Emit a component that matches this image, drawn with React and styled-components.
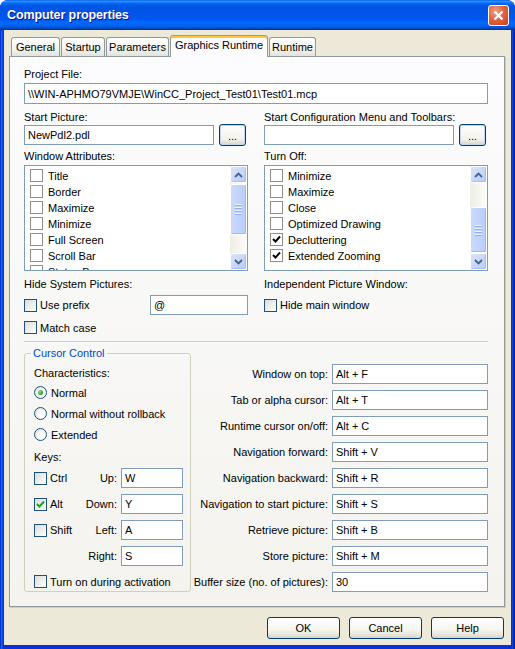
import React from "react"
import styled, { createGlobalStyle } from "styled-components"

const GlobalStyle = createGlobalStyle`
  html, body {
    margin: 0;
    padding: 0;
    background: #ffffff;
  }
  body {
    font-family: "Liberation Sans", Arial, sans-serif;
    font-size: 11px;
    color: #000;
  }
  * {
    box-sizing: border-box;
  }
`

const Window = styled.div`
  width: 515px;
  height: 649px;
  display: flex;
  flex-direction: column;
  background: linear-gradient(90deg, #0019cf 0px, #0855dd 1px, #166aee 2px, #0831d9 3px, #0831d9 512px, #0855dd 513px, #001ea0 514px);
  border-radius: 8px 8px 0 0;
  overflow: hidden;
`

const TitleBar = styled.div`
  height: 30px;
  flex: none;
  display: flex;
  align-items: center;
  justify-content: space-between;
  padding: 0 6px 0 7px;
  background: linear-gradient(
    #0058ee 0%, #3593ff 4%, #288eff 6%, #127dff 8%, #036ffc 10%,
    #0262ee 14%, #0057e5 20%, #0054e3 24%, #0055eb 56%, #005bf5 66%,
    #026afe 76%, #0062ef 86%, #0052d6 92%, #0040ab 96%, #003092 100%
  );
`

const Title = styled.span`
  color: #ffffff;
  font-weight: bold;
  font-size: 12.5px;
  letter-spacing: -0.1px;
  text-shadow: 1px 1px 0 #0f1089;
`

const CloseButton = styled.div`
  width: 21px;
  height: 21px;
  border: 1px solid #ffffff;
  border-radius: 3px;
  background: radial-gradient(circle at 35% 30%, #f0a48a 0%, #e2633f 45%, #c8401c 100%);
  display: flex;
  align-items: center;
  justify-content: center;
`

const Client = styled.div`
  flex: 1;
  margin: 0 4px 4px 4px;
  background: #ece9d8;
  display: flex;
  flex-direction: column;
  padding: 5px 6px 6px 5px;
`

const TabStrip = styled.div`
  height: 21px;
  display: flex;
  align-items: flex-end;
  gap: 1px;
  padding-left: 2px;
`

const Tab = styled.div`
  width: ${p => p.$w}px;
  height: ${p => (p.$active ? 22 : 19)}px;
  margin-bottom: ${p => (p.$active ? -1 : 0)}px;
  position: relative;
  z-index: ${p => (p.$active ? 1 : 0)};
  border: 1px solid #919b9c;
  border-bottom: none;
  border-top-color: ${p => (p.$active ? "#e68b2c" : "#919b9c")};
  border-radius: 3px 3px 0 0;
  background: ${p => (p.$active ? "#fcfcfe" : "linear-gradient(#ffffff, #f3f3ef 60%, #e3e2dc)")};
  box-shadow: ${p => (p.$active ? "inset 0 2px 0 #ffc73c" : "none")};
  display: flex;
  align-items: center;
  justify-content: center;
  padding-bottom: ${p => (p.$active ? 3 : 0)}px;
  white-space: nowrap;
`

const Panel = styled.div`
  height: 551px;
  border: 1px solid #919b9c;
  box-shadow: 1px 1px 0 #d0cec1;
  background: linear-gradient(#fcfcfe, #f4f3ee);
  padding: 11px 16px 0 14px;
  display: flex;
  flex-direction: column;
`

const Label = styled.div`
  height: 13px;
  line-height: 13px;
  white-space: nowrap;
  margin-top: ${p => p.$top || 0}px;
  margin-bottom: ${p => (p.$gap === undefined ? 2 : p.$gap)}px;
`

const TextBox = styled.input`
  width: ${p => (p.$w ? `${p.$w}px` : "100%")};
  height: ${p => p.$h || 20}px;
  border: 1px solid #7f9db9;
  background: #ffffff;
  padding: 0 3px;
  margin: 0;
  font-family: "Liberation Sans", Arial, sans-serif;
  font-size: 11px;
  color: #000;
  outline: none;
`

const Columns = styled.div`
  display: grid;
  grid-template-columns: 224px 224px;
  column-gap: 16px;
  margin-top: ${p => p.$top || 0}px;
`

const Field = styled.div`
  display: flex;
  flex-direction: column;
`

const PickerRow = styled.div`
  height: 22px;
  display: flex;
  align-items: center;
  gap: 5px;
`

const DotsButton = styled.div`
  width: 27px;
  height: 22px;
  border: 1px solid #003c74;
  border-radius: 3px;
  background: linear-gradient(#ffffff, #f3f2ec 70%, #d8d3c6);
  box-shadow: inset 0 0 0 1px #c4d6f5;
  display: flex;
  align-items: flex-end;
  justify-content: center;
  padding-bottom: 5px;
  line-height: 8px;
  font-size: 11px;
`

const ListBox = styled.div`
  height: 106px;
  border: 1px solid #7f9db9;
  background: #ffffff;
  display: flex;
`

const ListItems = styled.div`
  flex: 1;
  overflow: hidden;
  padding-top: 2px;
`

const ListItem = styled.div`
  height: 16px;
  display: flex;
  align-items: center;
  gap: 5px;
  padding-left: 5px;
  white-space: nowrap;
`

const FlatBox = styled.div`
  width: 13px;
  height: 13px;
  flex: none;
  border: 1px solid #8e8f8f;
  background: #ffffff;
  display: flex;
  align-items: center;
  justify-content: center;
  margin-top: -2px;
`

const ScrollBar = styled.div`
  width: 17px;
  flex: none;
  display: flex;
  flex-direction: column;
  background: linear-gradient(90deg, #eeede5, #fdfdfa);
`

const ScrollArrow = styled.div`
  height: 17px;
  flex: none;
  border: 1px solid #ffffff;
  border-radius: 2px;
  background: linear-gradient(135deg, #d9e5fd, #b8cbf8);
  box-shadow: inset -1px -1px 0 #a7bef4;
  display: flex;
  align-items: center;
  justify-content: center;
`

const Track = styled.div`
  flex: 1;
  padding-top: ${p => p.$offset}px;
`

const Thumb = styled.div`
  height: ${p => p.$h}px;
  border: 1px solid #ffffff;
  border-radius: 2px;
  background: linear-gradient(90deg, #cbdafd, #b9cdfb);
  box-shadow: inset -1px -1px 0 #a2b9f0;
  display: flex;
  flex-direction: column;
  align-items: center;
  justify-content: center;
  gap: 1px;
`

const Grip = styled.div`
  width: 7px;
  height: 1px;
  background: #eef4fe;
  box-shadow: 0 1px 0 #8cb0f8;
  margin-bottom: 1px;
`

const CheckRow = styled.div`
  display: flex;
  align-items: center;
  gap: 3px;
  height: ${p => p.$h || 13}px;
  margin-top: ${p => p.$top || 0}px;
  white-space: nowrap;
`

const SpreadRow = styled.div`
  height: 20px;
  display: flex;
  align-items: center;
  justify-content: space-between;
`

const Box = styled.div`
  width: 13px;
  height: 13px;
  flex: none;
  border: 1px solid #1c5180;
  background: linear-gradient(135deg, #dcdcd7, #ffffff);
  display: flex;
  align-items: center;
  justify-content: center;
`

const Separator = styled.div`
  height: 2px;
  margin-top: 7px;
  border-top: 1px solid #d0d0bf;
  border-bottom: 1px solid #ffffff;
`

const Bottom = styled.div`
  display: flex;
  align-items: flex-start;
  margin-top: 4px;
`

const Group = styled.fieldset`
  width: 167px;
  flex: none;
  margin: 0;
  padding: 0 7px 3px 9px;
  border: 1px solid #d0d0bf;
  border-radius: 3px;
  display: flex;
  flex-direction: column;
`

const Legend = styled.legend`
  color: #0046d5;
  padding: 0 2px;
  margin-left: -3px;
  line-height: 13px;
`

const RadioRow = styled.div`
  height: 21px;
  display: flex;
  align-items: center;
  gap: 4px;
  white-space: nowrap;
`

const Radio = styled.div`
  width: 13px;
  height: 13px;
  flex: none;
  border-radius: 50%;
  border: 1px solid #1c5180;
  background: radial-gradient(circle at 65% 65%, #ffffff 20%, #dcdcd7 100%);
  display: flex;
  align-items: center;
  justify-content: center;
  &::after {
    content: "";
    display: ${p => (p.$on ? "block" : "none")};
    width: 5px;
    height: 5px;
    border-radius: 50%;
    background: radial-gradient(circle at 35% 35%, #8ee28e, #21a121 70%);
  }
`

const KeyGrid = styled.div`
  display: grid;
  grid-template-columns: 46px 1fr 62px;
  grid-auto-rows: 20px;
  column-gap: 4px;
  row-gap: 6px;
  margin-top: 4px;
  align-items: center;
`

const RightLabel = styled.div`
  text-align: right;
  white-space: nowrap;
`

const ShortcutGrid = styled.div`
  flex: 1;
  display: grid;
  grid-template-columns: 1fr 156px;
  grid-auto-rows: 20px;
  column-gap: 4px;
  row-gap: 6px;
  margin-top: 17px;
  align-items: center;
`

const ButtonBar = styled.div`
  display: flex;
  justify-content: flex-end;
  gap: 9px;
  margin-top: 10px;
  padding-right: 1px;
`

const Button = styled.div`
  width: 73px;
  height: 22px;
  border: 1px solid #003c74;
  border-radius: 3px;
  background: linear-gradient(#ffffff, #f5f4ee 60%, #e3e0d4 90%, #d6d0c5);
  display: flex;
  align-items: center;
  justify-content: center;
  font-size: 11px;
`

const Check = ({ color = "#000" }) => (
  <svg width="9" height="9" viewBox="0 0 9 9">
    <polyline points="1,4 3.5,6.5 8,1.5" fill="none" stroke={color} strokeWidth="1.9" />
  </svg>
)

const Arrow = ({ up }) => (
  <svg width="9" height="6" viewBox="0 0 9 6">
    <polyline
      points={up ? "1,5 4.5,1.5 8,5" : "1,1 4.5,4.5 8,1"}
      fill="none"
      stroke="#4d6185"
      strokeWidth="1.8"
    />
  </svg>
)

const CheckBox = ({ label, checked, h, top }) => (
  <CheckRow $h={h} $top={top}>
    <Box>{checked && <Check color="#21a121" />}</Box>
    <span>{label}</span>
  </CheckRow>
)

const CheckList = ({ items, thumbTop, thumbHeight }) => (
  <ListBox>
    <ListItems>
      {items.map(([name, on]) => (
        <ListItem key={name}>
          <FlatBox>{on && <Check />}</FlatBox>
          <span>{name}</span>
        </ListItem>
      ))}
    </ListItems>
    <ScrollBar>
      <ScrollArrow><Arrow up /></ScrollArrow>
      <Track $offset={thumbTop}>
        <Thumb $h={thumbHeight}>
          <Grip /><Grip /><Grip /><Grip />
        </Thumb>
      </Track>
      <ScrollArrow><Arrow /></ScrollArrow>
    </ScrollBar>
  </ListBox>
)

const projectPath = "\\\\WIN-APHMO79VMJE\\WinCC_Project_Test01\\Test01.mcp"

const windowAttributes = [
  ["Title"], ["Border"], ["Maximize"], ["Minimize"],
  ["Full Screen"], ["Scroll Bar"], ["Status Bar"],
]

const turnOff = [
  ["Minimize"], ["Maximize"], ["Close"], ["Optimized Drawing"],
  ["Decluttering", true], ["Extended Zooming", true],
]

const tabs = [
  ["General", 49], ["Startup", 44], ["Parameters", 63],
  ["Graphics Runtime", 98], ["Runtime", 47],
]

const keys = [
  ["Ctrl", false, "Up:", "W"],
  ["Alt", true, "Down:", "Y"],
  ["Shift", false, "Left:", "A"],
  [null, false, "Right:", "S"],
]

const shortcuts = [
  ["Window on top:", "Alt + F"],
  ["Tab or alpha cursor:", "Alt + T"],
  ["Runtime cursor on/off:", "Alt + C"],
  ["Navigation forward:", "Shift + V"],
  ["Navigation backward:", "Shift + R"],
  ["Navigation to start picture:", "Shift + S"],
  ["Retrieve picture:", "Shift + B"],
  ["Store picture:", "Shift + M"],
  ["Buffer size (no. of pictures):", "30"],
]

function App() {
  return (
    <>
      <GlobalStyle />
      <Window>
        <TitleBar>
          <Title>Computer properties</Title>
          <CloseButton>
            <svg width="11" height="11" viewBox="0 0 11 11">
              <path d="M1.5 1.5 L9.5 9.5 M9.5 1.5 L1.5 9.5" stroke="#ffffff" strokeWidth="2.2" />
            </svg>
          </CloseButton>
        </TitleBar>
        <Client>
          <TabStrip>
            {tabs.map(([name, w]) => (
              <Tab key={name} $w={w} $active={name === "Graphics Runtime"}>{name}</Tab>
            ))}
          </TabStrip>
          <Panel>
            <Label>Project File:</Label>
            <TextBox $h={21} readOnly value={projectPath} />

            <Columns $top={7}>
              <Field>
                <Label $gap={0}>Start Picture:</Label>
                <PickerRow>
                  <TextBox $w={190} readOnly value="NewPdl2.pdl" />
                  <DotsButton>...</DotsButton>
                </PickerRow>
              </Field>
              <Field>
                <Label $gap={0}>Start Configuration Menu and Toolbars:</Label>
                <PickerRow>
                  <TextBox $w={190} readOnly value="" />
                  <DotsButton>...</DotsButton>
                </PickerRow>
              </Field>
            </Columns>

            <Columns $top={4}>
              <Field>
                <Label>Window Attributes:</Label>
                <CheckList items={windowAttributes} thumbTop={1} thumbHeight={51} />
              </Field>
              <Field>
                <Label>Turn Off:</Label>
                <CheckList items={turnOff} thumbTop={24} thumbHeight={46} />
              </Field>
            </Columns>

            <Columns $top={7}>
              <Field>
                <Label $gap={4}>Hide System Pictures:</Label>
                <SpreadRow>
                  <CheckBox label="Use prefix" />
                  <TextBox $w={98} readOnly value="@" />
                </SpreadRow>
                <CheckBox label="Match case" top={6} />
              </Field>
              <Field>
                <Label $gap={4}>Independent Picture Window:</Label>
                <SpreadRow>
                  <CheckBox label="Hide main window" />
                </SpreadRow>
              </Field>
            </Columns>

            <Separator />

            <Bottom>
              <Group>
                <Legend>Cursor Control</Legend>
                <Label $top={7} $gap={2}>Characteristics:</Label>
                <RadioRow><Radio $on /><span>Normal</span></RadioRow>
                <RadioRow><Radio /><span>Normal without rollback</span></RadioRow>
                <RadioRow><Radio /><span>Extended</span></RadioRow>
                <Label $top={6} $gap={0}>Keys:</Label>
                <KeyGrid>
                  {keys.map(([mod, on, dir, val]) => (
                    <React.Fragment key={dir}>
                      <div>{mod && <CheckBox label={mod} checked={on} />}</div>
                      <RightLabel>{dir}</RightLabel>
                      <TextBox readOnly value={val} />
                    </React.Fragment>
                  ))}
                </KeyGrid>
                <CheckBox label="Turn on during activation" top={9} />
              </Group>
              <ShortcutGrid>
                {shortcuts.map(([label, val]) => (
                  <React.Fragment key={label}>
                    <RightLabel>{label}</RightLabel>
                    <TextBox readOnly value={val} />
                  </React.Fragment>
                ))}
              </ShortcutGrid>
            </Bottom>
          </Panel>
          <ButtonBar>
            <Button>OK</Button>
            <Button>Cancel</Button>
            <Button>Help</Button>
          </ButtonBar>
        </Client>
      </Window>
    </>
  )
}

export default App
